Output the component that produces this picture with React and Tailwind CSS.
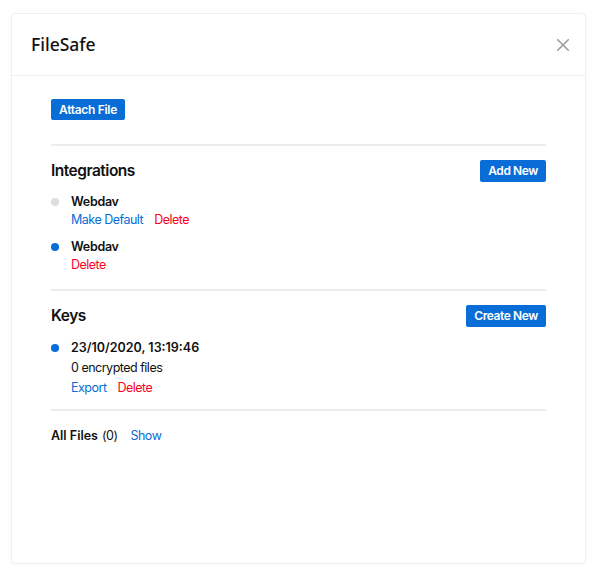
export default function App() {
  const body = { fontFamily: 'Inter, "Liberation Sans", Arial, sans-serif' };
  return (
    <div className="w-[600px] h-[578px] bg-white pt-[13px] pl-[11px]" style={body}>
      <div className="w-[575px] h-[551px] border border-[#f0f0f0] rounded-[4px] bg-white flex flex-col shadow-[0_1px_2px_rgba(0,0,0,0.03)]">
        {/* header */}
        <div className="h-[62px] shrink-0 border-b border-[#efefef] flex items-center justify-between pl-[19px] pr-[16px]">
          <div
            className="text-[17.5px] font-medium text-[#111] leading-none"
            style={{ fontFamily: '"Noto Sans", sans-serif' }}
          >
            FileSafe
          </div>
          <svg width="12" height="12" viewBox="0 0 12 12" className="mt-[1px]">
            <path d="M0.7 0.7 L11.3 11.3 M11.3 0.7 L0.7 11.3" stroke="#9c9c9c" strokeWidth="1.6" strokeLinecap="round" />
          </svg>
        </div>
        {/* body */}
        <div className="px-[39px] pt-[23px] text-[12.5px] tracking-[-0.5px] text-[#111]">
          <button className="h-[21px] px-[8px] bg-[#086dd6] text-white font-semibold text-[12px] tracking-[-0.3px] rounded-[2px] leading-none">
            Attach File
          </button>
          <div className="h-[2px] bg-[#ececec] mt-[24px]" />

          {/* Integrations */}
          <div className="flex items-center justify-between mt-[13px]">
            <div className="text-[15.5px] font-semibold tracking-[-0.5px]">Integrations</div>
            <button className="h-[22px] px-[8px] bg-[#086dd6] text-white font-semibold text-[12px] tracking-[-0.4px] rounded-[2px] leading-none">
              Add New
            </button>
          </div>
          <div className="mt-[11px] flex flex-col gap-[9px]">
            <div className="flex">
              <div className="w-[8px] h-[8px] rounded-full bg-[#dedede] mt-[5px] mr-[12px]" />
              <div className="leading-[18px]">
                <div className="font-semibold tracking-[-0.3px]">Webdav</div>
                <div className="flex gap-[11px]">
                  <span className="text-[#086dd6]">Make Default</span>
                  <span className="text-[#f80324]">Delete</span>
                </div>
              </div>
            </div>
            <div className="flex">
              <div className="w-[8px] h-[8px] rounded-full bg-[#086dd6] mt-[5px] mr-[12px]" />
              <div className="leading-[18px]">
                <div className="font-semibold tracking-[-0.3px]">Webdav</div>
                <div className="flex gap-[11px]">
                  <span className="text-[#f80324]">Delete</span>
                </div>
              </div>
            </div>
          </div>
          <div className="h-[2px] bg-[#ececec] mt-[15px]" />

          {/* Keys */}
          <div className="flex items-center justify-between mt-[13px]">
            <div className="text-[15.5px] font-semibold tracking-[-0.5px]">Keys</div>
            <button className="h-[22px] px-[8px] bg-[#086dd6] text-white font-semibold text-[12px] tracking-[-0.4px] rounded-[2px] leading-none">
              Create New
            </button>
          </div>
          <div className="mt-[10px] flex">
            <div className="w-[8px] h-[8px] rounded-full bg-[#086dd6] mt-[6px] mr-[12px]" />
            <div className="leading-[19.5px]">
              <div className="font-semibold tracking-[0px]">23/10/2020, 13:19:46</div>
              <div className="pt-[1px]">0 encrypted files</div>
              <div className="flex gap-[11px]">
                <span className="text-[#086dd6]">Export</span>
                <span className="text-[#f80324]">Delete</span>
              </div>
            </div>
          </div>
          <div className="h-[2px] bg-[#ececec] mt-[12px]" />

          {/* All files */}
          <div className="mt-[16px] flex items-center leading-[18px]">
            <span className="font-semibold tracking-[0px]">All Files</span>
            <span className="ml-[4px]">(0)</span>
            <span className="ml-[13px] text-[#086dd6]">Show</span>
          </div>
        </div>
      </div>
    </div>
  );
}
